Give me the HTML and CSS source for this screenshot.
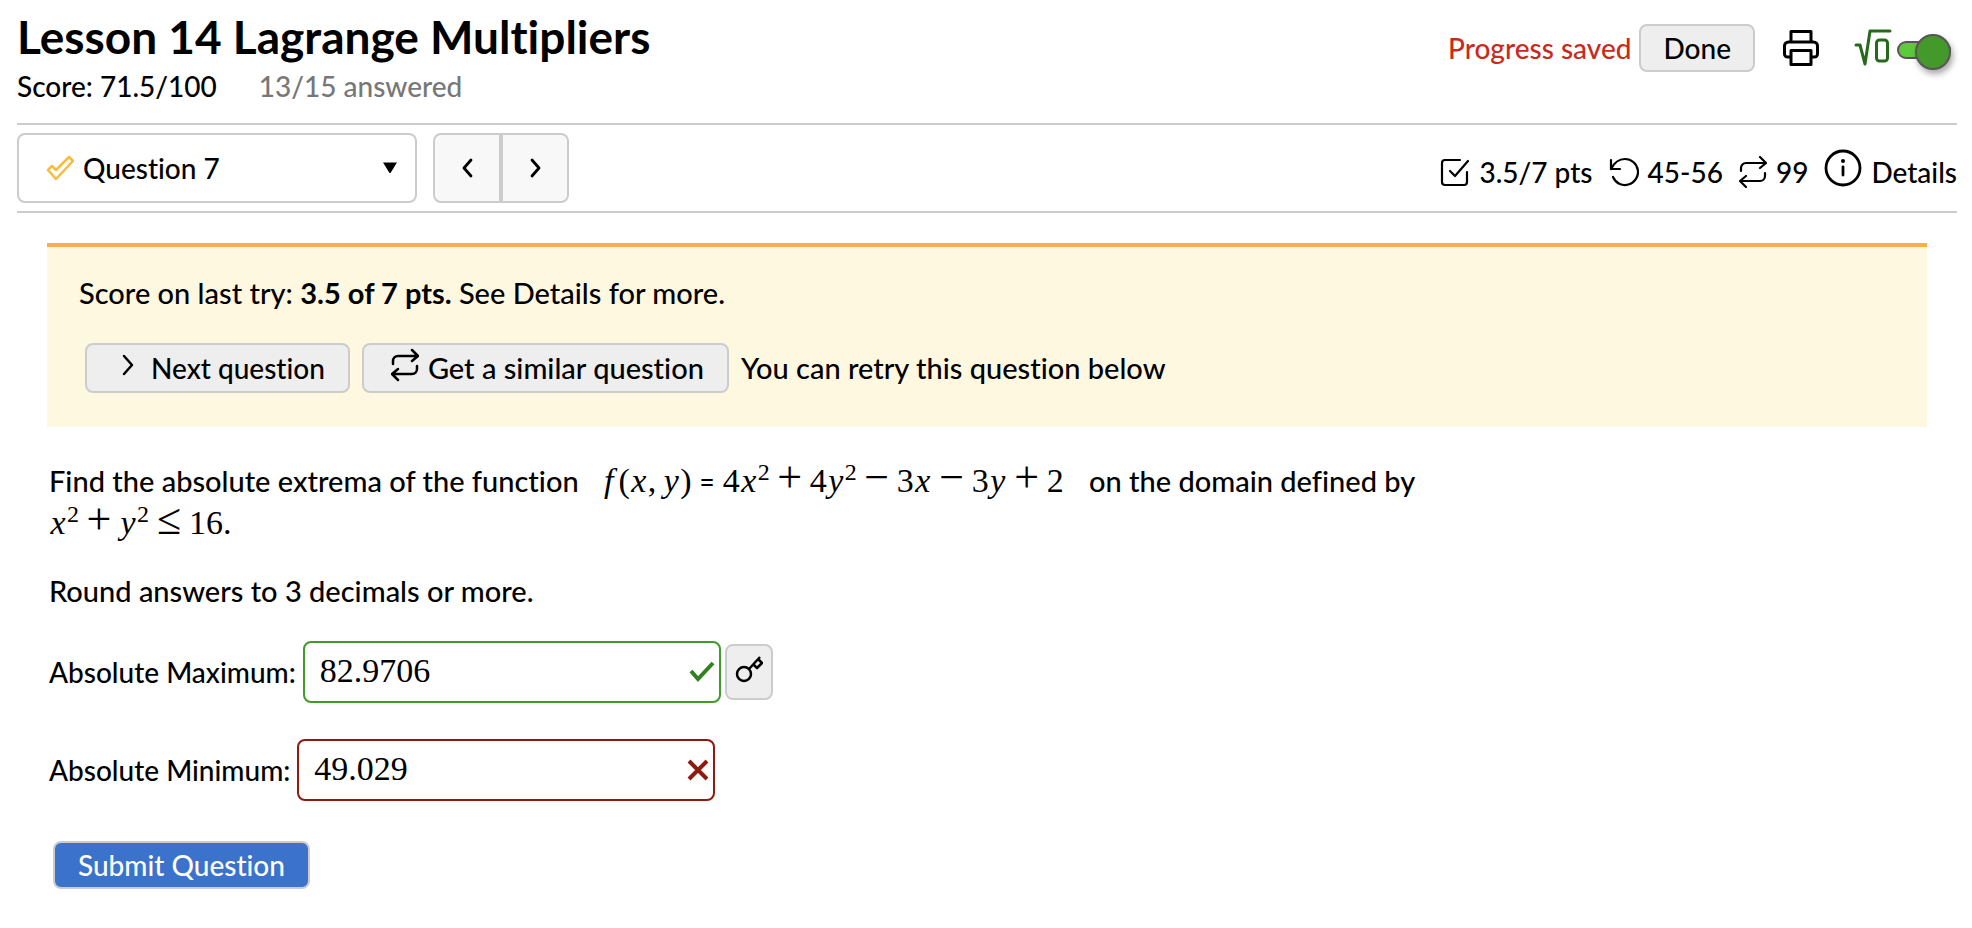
FILE: index.html
```html
<!DOCTYPE html>
<html lang="en">
<head>
  <meta charset="UTF-8">
  <meta name="viewport" content="width=device-width, initial-scale=1">
  <title>Lesson 14 Lagrange Multipliers</title>
  <link rel="stylesheet" href="styles.css">
</head>
<body>

<header class="header">
  <div>
    <h1>Lesson 14 Lagrange Multipliers</h1>
    <div class="scores">
      <span>Score: 71.5/100</span>
      <span class="answered">13/15 answered</span>
    </div>
  </div>
  <div class="tools">
    <span class="saved">Progress saved</span>
    <button type="button" class="btn done">Done</button>
    <button type="button" class="icon-btn print" aria-label="Print">
      <svg width="38" height="38" viewBox="0 0 38 38" fill="none" stroke="#000" stroke-width="3" stroke-linejoin="round">
        <path d="M9 13V2.500h20V13M8 28H5.500a3 3 0 0 1-3-3V17a4 4 0 0 1 4-4h25a4 4 0 0 1 4 4v8a3 3 0 0 1-3 3H30"/>
        <path d="M9 21.500h20v14H9z"/>
      </svg>
    </button>
    <label class="switch">
      <svg width="38" height="38" viewBox="0 0 38 38" fill="none" stroke="#27691a" stroke-width="3" stroke-linecap="round" stroke-linejoin="round">
        <path d="M2 16h4l5 19 5-33h20"/>
        <rect x="22.500" y="11" width="11" height="21" rx="3"/>
      </svg>
      <input type="checkbox" role="switch" aria-label="Equation editor" checked>
    </label>
  </div>
</header>

<nav class="navbar">
  <div class="question-nav">
    <div class="picker">
      <svg class="picker-mark" width="28" height="26" viewBox="0 0 28 26" fill="none" stroke="#f8bb3c" stroke-width="2.500" stroke-linejoin="round">
        <path d="M2 15l4-4 4 4L23 2l4 4-17 18z"/>
      </svg>
      <select aria-label="Question">
        <option>Question 7</option>
      </select>
      <svg class="picker-arrow" width="16" height="12" viewBox="0 0 16 12"><path d="M1 0.500h14L8.500 11h-1z"/></svg>
    </div>
    <div class="pager">
      <button type="button" aria-label="Previous question">
        <svg width="14" height="22" viewBox="0 0 14 22" fill="none" stroke="#000" stroke-width="2.800" stroke-linecap="round" stroke-linejoin="round"><path d="M11 3L4 11l7 8"/></svg>
      </button>
      <button type="button" aria-label="Next question">
        <svg width="14" height="22" viewBox="0 0 14 22" fill="none" stroke="#000" stroke-width="2.800" stroke-linecap="round" stroke-linejoin="round"><path d="M4 3l7 8-7 8"/></svg>
      </button>
    </div>
  </div>
  <div class="info">
    <span class="info-item">
      <svg width="30" height="30" viewBox="0 0 30 30" fill="none" stroke="#000" stroke-width="2.200" stroke-linecap="round" stroke-linejoin="round">
        <path d="M20 3H5a3 3 0 0 0-3 3v19a3 3 0 0 0 3 3h19a3 3 0 0 0 3-3V15"/><path d="M10 14l5 5L28 4"/>
      </svg>
      3.5/7 pts
    </span>
    <span class="info-item">
      <svg width="30" height="30" viewBox="0 0 30 30" fill="none" stroke="#000" stroke-width="2.200" stroke-linecap="round" stroke-linejoin="round">
        <path d="M2 3v9h9"/><path d="M2 12C5 6 10 2 16 2a13 13 0 1 1-12 18"/>
      </svg>
      45-56
    </span>
    <span class="info-item">
      <svg width="28" height="34" viewBox="0 0 28 34" fill="none" stroke="#000" stroke-width="2.200" stroke-linecap="round" stroke-linejoin="round">
        <path d="M21 2l6 6-6 5M27 8H7a5 5 0 0 0-5 5v3"/><path d="M7 32l-6-6 6-5M1 26h20a5 5 0 0 0 5-5v-3"/>
      </svg>
      99
    </span>
    <button type="button" class="info-item details">
      <svg width="38" height="38" viewBox="0 0 38 38" fill="none" stroke="#000" stroke-width="2.800" stroke-linecap="round">
        <circle cx="19" cy="19" r="17"/><path d="M19 18v8"/><path d="M19 12v0.100" stroke-width="4"/>
      </svg>
      Details
    </button>
  </div>
</nav>

<main class="content">
  <section class="notice">
    <p>Score on last try: <strong>3.5 of 7 pts.</strong> See Details for more.</p>
    <div class="notice-actions">
      <button type="button" class="btn next">
        <svg width="14" height="22" viewBox="0 0 14 22" fill="none" stroke="#000" stroke-width="2.500" stroke-linecap="round" stroke-linejoin="round"><path d="M3 2l8 9-8 9"/></svg>
        Next question
      </button>
      <button type="button" class="btn similar">
        <svg width="28" height="34" viewBox="0 0 28 34" fill="none" stroke="#000" stroke-width="2.500" stroke-linecap="round" stroke-linejoin="round">
          <path d="M21 2l6 6-6 5M27 8H7a5 5 0 0 0-5 5v3"/><path d="M7 32l-6-6 6-5M1 26h20a5 5 0 0 0 5-5v-3"/>
        </svg>
        Get a similar question
      </button>
      <span>You can retry this question below</span>
    </div>
  </section>

  <form class="question">
    <p>Find the absolute extrema of the function
      <span class="math inset"><i class="fn">f</i>(<i class="var">x</i>,<i class="var second">y</i>)<span class="eq">=</span>4<i class="var">x</i><sup>2</sup><span class="op">+</span>4<i class="var">y</i><sup>2</sup><span class="op">−</span>3<i class="var">x</i><span class="op">−</span>3<i class="var">y</i><span class="op">+</span>2</span>
      on the domain defined by<br>
      <span class="math"><i class="var">x</i><sup>2</sup><span class="op">+</span><i class="var">y</i><sup>2</sup><span class="op">≤</span>16.</span>
    </p>
    <p>Round answers to 3 decimals or more.</p>

    <div class="answer">
      <label for="max">Absolute Maximum:</label>
      <div class="field correct">
        <input type="text" id="max" value="82.9706">
        <svg width="26" height="22" viewBox="0 0 26 22" fill="none" stroke="#31811f" stroke-width="4"><path d="M2 10l7 8L24 2"/></svg>
      </div>
      <button type="button" class="btn key" aria-label="Show answer">
        <svg width="28" height="28" viewBox="0 0 28 28" fill="none" stroke="#000" stroke-width="2.500" stroke-linejoin="round">
          <circle cx="9" cy="19" r="7"/><path d="M14 14L25 2M18 9l4 4 5-5-4-4"/>
        </svg>
      </button>
    </div>

    <div class="answer">
      <label for="min">Absolute Minimum:</label>
      <div class="field wrong">
        <input type="text" id="min" value="49.029">
        <svg width="22" height="22" viewBox="0 0 22 22" fill="none" stroke="#8e1b10" stroke-width="4"><path d="M2 2l18 18M20 2L2 20"/></svg>
      </div>
    </div>

    <button type="button" class="btn submit">Submit Question</button>
  </form>
</main>

</body>
</html>
```
FILE: styles.css
```css
* { box-sizing: border-box; }
body { margin: 0; padding: 12px 15px 12px 17px; background: #fff; color: #000; font: 500 28px/36px Lato, "Liberation Sans", sans-serif; font-variant-ligatures: none; }
h1 { margin: 0; font-size: 46px; line-height: 50px; }
p { margin: 0; font-size: 29px; }
svg { flex: none; display: block; }
button, select, input { font: inherit; color: inherit; font-variant-ligatures: none; }
button { cursor: pointer; }

.header { display: flex; justify-content: space-between; align-items: flex-start; height: 111px; }
.scores { display: flex; gap: 42px; line-height: 48px; }
.answered { color: #777; }
.tools { display: flex; align-items: center; padding: 12px 6px 0 0; }
.saved { color: #c92a1e; margin-right: 8px; }
.btn { display: flex; align-items: center; height: 48px; padding: 0 23px; background: #eee; border: 2px solid #ccc; border-radius: 8px; }
.done { padding: 0 22px; }
.icon-btn { padding: 0; border: 0; background: none; }
.print { margin: 0 34px 0 27px; }
.switch { display: flex; align-items: center; gap: 5px; }
.switch input { appearance: none; position: relative; width: 54px; height: 18px; margin: 4px 0 0; border: 2px solid #5b5459; border-radius: 9px; background: #5dca3b; }
.switch input::before { content: ""; position: absolute; right: -2px; top: -9px; width: 32px; height: 32px; border: 2px solid #5b5459; border-radius: 50%; background: #439a2a; box-shadow: 2px 4px 6px rgba(0,0,0,0.35); }

.navbar { display: flex; justify-content: space-between; align-items: center; height: 90px; border-top: 2px solid #ccc; border-bottom: 2px solid #ccc; }
.question-nav { display: flex; gap: 16px; }
.picker { position: relative; width: 400px; height: 70px; }
.picker select { appearance: none; width: 100%; height: 100%; padding: 0 60px 0 64px; border: 2px solid #ccc; border-radius: 8px; background: #fff; }
.picker-mark { position: absolute; left: 29px; top: 22px; }
.picker-arrow { position: absolute; right: 19px; top: 29px; }
.pager { display: flex; }
.pager button { display: flex; align-items: center; justify-content: center; width: 68px; height: 70px; padding: 0; border: 2px solid #ccc; background: #f8f8f8; }
.pager button:first-child { border-radius: 8px 0 0 8px; }
.pager button:last-child { border-radius: 0 8px 8px 0; }
.info { display: flex; align-items: center; gap: 16px; padding-top: 8px; }
.info-item { display: flex; align-items: center; gap: 9px; }
.details { padding: 0; border: 0; background: none; }
.details svg { margin-bottom: 8px; }

.content { padding: 30px 30px 0; }
.notice { height: 184px; padding: 28px 32px; background: #fff8e1; border-top: 4px solid #f8ae4c; }
.notice-actions { display: flex; align-items: center; gap: 12px; padding: 32px 0 0 6px; font-size: 29px; }
.notice-actions .btn { height: 50px; }
.notice-actions .next { padding-left: 34px; gap: 16px; font-size: 28px; }
.notice-actions .similar { padding-left: 27px; gap: 9px; }
.notice-actions svg { margin-bottom: 6px; }

.question { padding: 33px 2px; line-height: 42px; }
.question p { margin-bottom: 26px; }
.question p + .answer { margin-top: 29px; }
.math { font: 34px/42px "Liberation Serif", serif; white-space: nowrap; }
.inset { margin: 0 18px; }
.fn { margin-right: 5px; }
.var { display: inline-block; width: 18px; text-align: center; }
.second { margin-left: 6px; }
.eq { margin: 0 8px; font: 500 26px Lato, sans-serif; }
.op { display: inline-block; width: 40px; font-size: 44px; line-height: 34px; text-align: center; }
sup { font-size: 24px; line-height: 0; }

.answer { display: flex; align-items: center; gap: 4px; margin-bottom: 36px; }
.answer label { margin-right: 3px; }
.field { position: relative; width: 418px; height: 62px; }
.field input { width: 100%; height: 100%; padding: 0 48px 2px 15px; border: 2px solid #439a2a; border-radius: 8px; background: #fff; font: 34px "Liberation Serif", serif; }
.field svg { position: absolute; right: 6px; top: 20px; }
.wrong input { border-color: #8e1b10; }
.key { width: 48px; height: 56px; padding: 0 8px 6px; }
.submit { margin: 40px 4px 0; background: #3b72cb; color: #fff; }
```
